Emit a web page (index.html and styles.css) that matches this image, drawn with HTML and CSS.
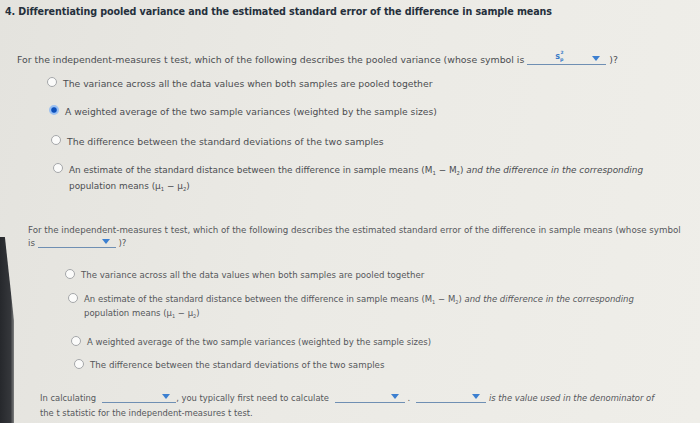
FILE: index.html
```html
<!DOCTYPE html>
<html lang="en">
<head>
    <meta charset="UTF-8">
    <title>Pooled variance</title>
    <link rel="stylesheet" href="styles.css">
</head>
<body>
<div class="bezel"></div>
<div class="page">

    <h2 class="title">4. Differentiating pooled variance and the estimated standard error of the difference in sample means</h2>

    <div class="q q1">
        <p class="prompt">For the independent-measures t test, which of the following describes the pooled variance (whose symbol is
            <span class="drop w80"><span class="val">s<sub class="sp">p</sub><sup>2</sup></span><span class="arrow"></span></span> )?</p>
        <div class="opt o1"><span class="radio"></span><span>The variance across all the data values when both samples are pooled together</span></div>
        <div class="opt o2"><span class="radio on"></span><span>A weighted average of the two sample variances (weighted by the sample sizes)</span></div>
        <div class="opt o3"><span class="radio"></span><span>The difference between the standard deviations of the two samples</span></div>
        <div class="opt o4"><span class="radio"></span><span>An estimate of the standard distance between the difference in sample means (M<sub>1</sub> &minus; M<sub>2</sub>) <i>and the difference in the corresponding</i><br>population means (&mu;<sub>1</sub> &minus; &mu;<sub>2</sub>)</span></div>
    </div>

    <div class="q q2">
        <p class="prompt">For the independent-measures t test, which of the following describes the estimated standard error of the difference in sample means (whose symbol<br>is <span class="drop w78"><span class="arrow"></span></span> )?</p>
        <div class="opt o5"><span class="radio"></span><span>The variance across all the data values when both samples are pooled together</span></div>
        <div class="opt o6"><span class="radio"></span><span>An estimate of the standard distance between the difference in sample means (M<sub>1</sub> &minus; M<sub>2</sub>) <i>and the difference in the corresponding</i><br>population means (&mu;<sub>1</sub> &minus; &mu;<sub>2</sub>)</span></div>
        <div class="opt o7"><span class="radio"></span><span>A weighted average of the two sample variances (weighted by the sample sizes)</span></div>
        <div class="opt o8"><span class="radio"></span><span>The difference between the standard deviations of the two samples</span></div>
    </div>

    <p class="fill">In calculating<span class="drop w75 gap"><span class="arrow"></span></span>, you typically first need to calculate<span class="drop w70 gap"><span class="arrow"></span></span> .<span class="drop w70 gap"><span class="arrow"></span></span> <i>is the value used in the denominator of</i><br>the t statistic for the independent-measures t test.</p>

</div>
</body>
</html>
```

FILE: styles.css
```css
body {
    margin: 0;
    background: linear-gradient(100deg, #e4e3de 0%, #ebeae5 45%, #efeee9 100%);
    font-family: "DejaVu Sans", Verdana, sans-serif;
    color: #4b4d51;
    width: 700px;
    height: 423px;
    overflow: hidden;
    position: relative;
}
.bezel {
    position: absolute;
    left: 0;
    bottom: 0;
    width: 14px;
    height: 186px;
    background: linear-gradient(to right, #26282c, #35373b 75%, #7d7e7e);
    clip-path: polygon(0 0, 35% 0, 100% 45%, 100% 100%, 0 100%);
}
.page {
    padding: 6px 0 0 5px;
}
.title {
    margin: 0;
    font-size: 9.6px;
    font-weight: bold;
    color: #25303c;
    letter-spacing: -0.1px;
}
.prompt {
    margin: 0;
    line-height: 13px;
}
sub, sup {
    line-height: 0;
}
.q1 {
    margin: 36px 0 0 12px;
}
.q1 .prompt {
    font-size: 9.35px;
}
.opt {
    display: flex;
    align-items: flex-start;
    gap: 6px;
    line-height: 16px;
}
.opt .radio {
    margin-top: 1px;
}
.o1 { margin: 10px 0 0 30px; font-size: 9.25px; }
.o2 { margin: 12px 0 0 32px; font-size: 9.2px; }
.o3 { margin: 14px 0 0 34px; font-size: 9.35px; }
.o4 { margin: 12px 0 0 36px; font-size: 8.9px; }
.radio {
    flex: none;
    width: 10px;
    height: 10px;
    border-radius: 50%;
    border: 1px solid #a5a7a9;
    background: #fbfbfa;
    box-sizing: border-box;
}
.radio.on {
    border: 2px solid #9cc0f0;
    background: radial-gradient(circle, #0d4fb8 0 55%, #3f7fe0 65%);
}
.q2 {
    margin: 30px 0 0 23px;
    color: #55575b;
}
.q2 .prompt {
    font-size: 8.7px;
    line-height: 12px;
}
.q2 .opt {
    line-height: 14px;
}
.o5 { margin: 19px 0 0 37px; font-size: 8.6px; }
.o6 { margin: 10px 0 0 40px; font-size: 8.5px; }
.o7 { margin: 15px 0 0 43px; font-size: 8.5px; }
.o8 { margin: 9px 0 0 46px; font-size: 8.7px; }
.drop {
    display: inline-block;
    position: relative;
    height: 11px;
    border-bottom: 1px solid #6f8fb3;
    vertical-align: -2px;
}
.gap {
    margin-left: 6px;
}
.w80 { width: 79px; }
.w78 { width: 78px; }
.w75 { width: 74px; }
.w70 { width: 70px; }
.drop .val {
    position: absolute;
    left: 28px;
    top: -3px;
    color: #3a7bc8;
    font-size: 8px;
    font-weight: bold;
}
.drop .arrow {
    position: absolute;
    right: 6px;
    top: 3px;
    border-left: 4px solid transparent;
    border-right: 4px solid transparent;
    border-top: 5px solid #3c7fd0;
}
sub {
    font-size: 60%;
    vertical-align: -2px;
}
sup {
    font-size: 55%;
    vertical-align: 5px;
}
.sp {
    margin-right: -3px;
}
.fill {
    margin: 19px 0 0 35px;
    font-size: 8.4px;
    line-height: 15px;
    color: #55575b;
}
```
